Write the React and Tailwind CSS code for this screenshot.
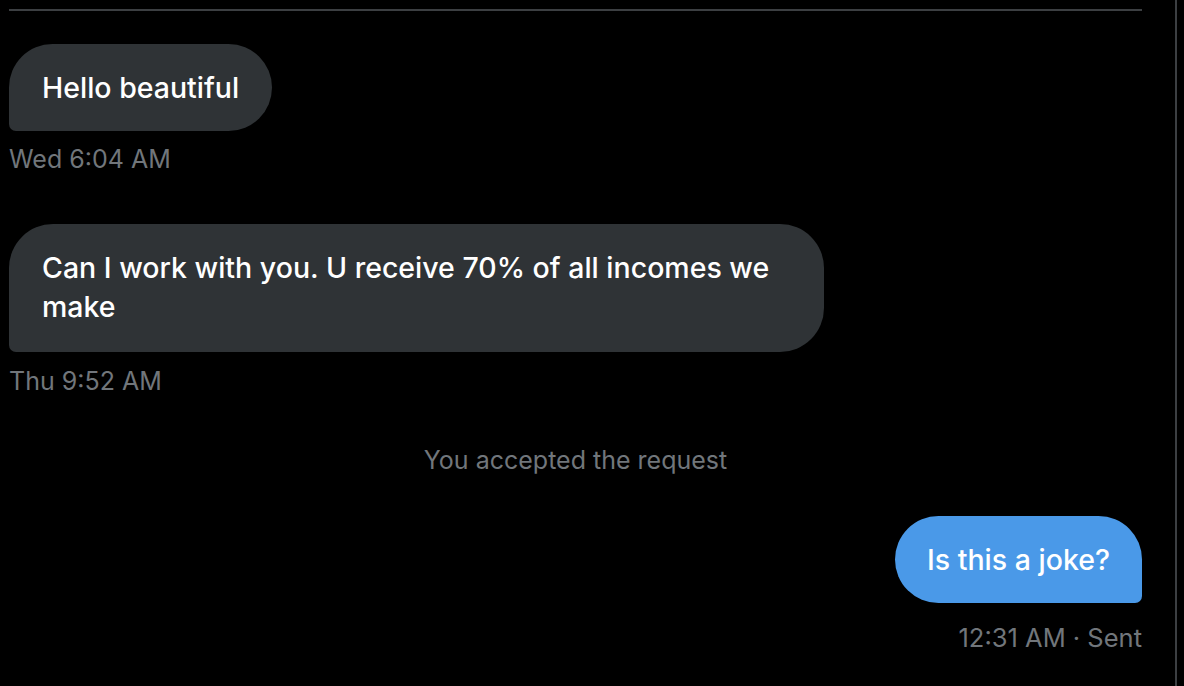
export default function App() {
  const sans = { fontFamily: 'Inter, "Noto Sans", sans-serif' };

  return (
    <div className="flex h-[686px] w-[1184px] overflow-hidden bg-black" style={sans}>
      <div className="flex w-[1175px] flex-col pl-[9px] pr-[33px]">
        <div className="mt-[9px] h-[2px] bg-[#3c3f42]" />

        <div className="mt-[33px] flex flex-col items-start">
          <div className="rounded-[44px] rounded-bl-[7px] bg-[#2f3336] px-[33px] py-[24px] text-[28.5px] font-medium leading-[39px] text-white">
            Hello beautiful
          </div>
          <div className="mt-[13px] text-[25px] leading-[30px] text-[#71767b]">Wed 6:04 AM</div>
        </div>

        <div className="mt-[50px] flex flex-col items-start">
          <div className="w-[815px] rounded-[44px] rounded-bl-[7px] bg-[#2f3336] px-[33px] py-[24px] pb-[26px] text-[28.5px] font-medium leading-[39px] text-white">
            Can I work with you. U receive 70% of all incomes we make
          </div>
          <div className="mt-[14px] text-[25px] leading-[30px] text-[#71767b]">Thu 9:52 AM</div>
        </div>

        <div className="mt-[49px] text-center text-[25px] leading-[30px] text-[#71767b]">
          You accepted the request
        </div>

        <div className="mt-[41px] flex flex-col items-end">
          <div className="rounded-[44px] rounded-br-[7px] bg-[#4a99e8] px-[32px] py-[24px] text-[28.5px] font-medium leading-[39px] text-white">
            Is this a joke?
          </div>
          <div className="mt-[20px] text-[25.5px] leading-[30px] text-[#71767b]">12:31 AM · Sent</div>
        </div>
      </div>
      <div className="w-[2px] bg-[#3c3f42]" />
    </div>
  );
}
